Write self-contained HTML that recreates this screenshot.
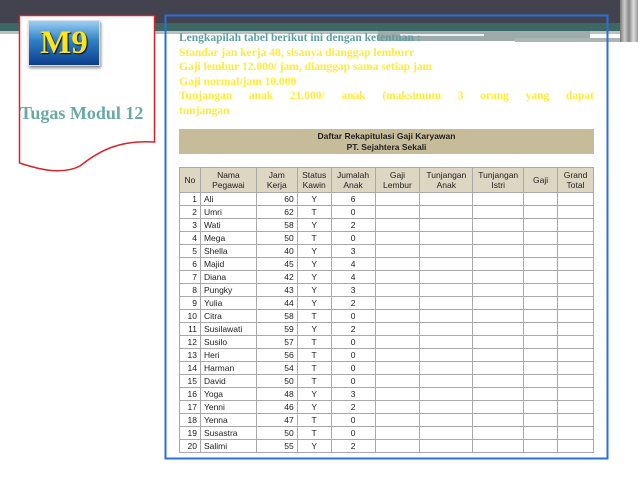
<!DOCTYPE html>
<html><head><meta charset="utf-8"><style>
body{margin:0;width:638px;height:478px;background:#fff;position:relative;overflow:hidden;font-family:"Liberation Serif",serif}
.abs{position:absolute}
table{border-collapse:collapse;font-family:"Liberation Sans",sans-serif;font-size:8.5px;color:#222}
td{border:1px solid #a9a9a9;padding:0 3px;height:12px;line-height:12px;white-space:nowrap}
th{background:#ddd6c2;border:1px solid #a9a9a9;font-weight:normal;font-size:8.5px;line-height:10px;height:24px;padding:0}
.r{text-align:right}.c{text-align:center}
.t{color:#ffeb3b;font-weight:bold;font-size:11.5px;line-height:14.5px}
</style></head><body>
<div class="abs" style="left:0;top:0;width:638px;height:23px;background:#43434f"></div>
<div class="abs" style="left:0;top:23px;width:638px;height:8px;background:#3d6764"></div>
<div class="abs" style="left:0;top:31px;width:638px;height:3px;background:#b7c1c1"></div>
<div class="abs" style="left:378px;top:31px;width:212px;height:10px;background:#9eabab"></div>
<div class="abs" style="left:515px;top:38px;width:115px;height:4px;background:#aab5b5"></div>
<div class="abs" style="left:400px;top:34px;width:84px;height:2px;background:#eef"></div>
<div class="abs" style="left:620px;top:0;width:18px;height:42px;background:linear-gradient(90deg,#777,#ccc,#888,#ddd,#999)"></div>
<svg class="abs" style="left:0;top:0" width="638" height="478">
<path d="M19.5 15.5 H154.5 V142 C120 140 100 150 80 166 C60 176 35 168 19.5 163 Z" fill="#fff" stroke="#d4242c" stroke-width="1.5"/>
<rect x="165.5" y="15.5" width="442" height="443" fill="none" stroke="#2b6fd9" stroke-width="2"/>
</svg>
<div class="abs" style="left:28px;top:20px;width:70px;height:44px;background:linear-gradient(#9ad0f2,#2f7fc4 45%,#0c3d8c);box-shadow:1px 2px 3px #888;border:1px solid #dde"></div>
<div class="abs" style="left:28px;top:20px;width:72px;text-align:center;color:#ffe41a;font-weight:bold;font-size:33px;line-height:46px;text-shadow:1px 1px 1px #000">M9</div>
<div class="abs" style="left:20px;top:103px;color:#6aa8a8;font-size:18px;font-weight:bold">Tugas Modul 12</div>
<div class="abs" style="left:179px;top:31px;width:415px">
<div style="color:#5f9ea0;font-weight:bold;font-size:11.5px;line-height:14.5px">Lengkapilah tabel berikut ini dengan ketentuan :</div>
<div class="t">Standar jan kerja 48, sisanya dianggap lemburr</div>
<div class="t">Gaji lembur 12.000/ jam, dianggap sama setiap jam</div>
<div class="t">Gaji normal/jam 10.000</div>
<div class="t" style="text-align:justify;text-align-last:justify">Tunjangan anak 21.000/ anak (maksimum 3 orang yang dapat</div>
<div class="t">tunjangan</div>
</div>
<div class="abs" style="left:179px;top:129px;width:415px;height:25px;background:#c7bc9a;text-align:center;font-family:'Liberation Sans',sans-serif;font-weight:bold;font-size:8.5px;line-height:11px;padding-top:2px;box-sizing:border-box;color:#222">Daftar Rekapitulasi Gaji Karyawan<br>PT. Sejahtera Sekali</div>
<table class="abs" style="left:179px;top:167px;width:415px">
<colgroup><col style="width:21px"><col style="width:56px"><col style="width:41px"><col style="width:34px"><col style="width:44px"><col style="width:45px"><col style="width:53px"><col style="width:51px"><col style="width:34px"><col style="width:36px"></colgroup>
<tr><th>No</th><th>Nama<br>Pegawai</th><th>Jam<br>Kerja</th><th>Status<br>Kawin</th><th>Jumalah<br>Anak</th><th>Gaji<br>Lembur</th><th>Tunjangan<br>Anak</th><th>Tunjangan<br>Istri</th><th>Gaji</th><th>Grand<br>Total</th></tr>
<tr><td class="r">1</td><td>Ali</td><td class="r">60</td><td class="c">Y</td><td class="c">6</td><td></td><td></td><td></td><td></td><td></td></tr>
<tr><td class="r">2</td><td>Umri</td><td class="r">62</td><td class="c">T</td><td class="c">0</td><td></td><td></td><td></td><td></td><td></td></tr>
<tr><td class="r">3</td><td>Wati</td><td class="r">58</td><td class="c">Y</td><td class="c">2</td><td></td><td></td><td></td><td></td><td></td></tr>
<tr><td class="r">4</td><td>Mega</td><td class="r">50</td><td class="c">T</td><td class="c">0</td><td></td><td></td><td></td><td></td><td></td></tr>
<tr><td class="r">5</td><td>Shella</td><td class="r">40</td><td class="c">Y</td><td class="c">3</td><td></td><td></td><td></td><td></td><td></td></tr>
<tr><td class="r">6</td><td>Majid</td><td class="r">45</td><td class="c">Y</td><td class="c">4</td><td></td><td></td><td></td><td></td><td></td></tr>
<tr><td class="r">7</td><td>Diana</td><td class="r">42</td><td class="c">Y</td><td class="c">4</td><td></td><td></td><td></td><td></td><td></td></tr>
<tr><td class="r">8</td><td>Pungky</td><td class="r">43</td><td class="c">Y</td><td class="c">3</td><td></td><td></td><td></td><td></td><td></td></tr>
<tr><td class="r">9</td><td>Yulia</td><td class="r">44</td><td class="c">Y</td><td class="c">2</td><td></td><td></td><td></td><td></td><td></td></tr>
<tr><td class="r">10</td><td>Citra</td><td class="r">58</td><td class="c">T</td><td class="c">0</td><td></td><td></td><td></td><td></td><td></td></tr>
<tr><td class="r">11</td><td>Susilawati</td><td class="r">59</td><td class="c">Y</td><td class="c">2</td><td></td><td></td><td></td><td></td><td></td></tr>
<tr><td class="r">12</td><td>Susilo</td><td class="r">57</td><td class="c">T</td><td class="c">0</td><td></td><td></td><td></td><td></td><td></td></tr>
<tr><td class="r">13</td><td>Heri</td><td class="r">56</td><td class="c">T</td><td class="c">0</td><td></td><td></td><td></td><td></td><td></td></tr>
<tr><td class="r">14</td><td>Harman</td><td class="r">54</td><td class="c">T</td><td class="c">0</td><td></td><td></td><td></td><td></td><td></td></tr>
<tr><td class="r">15</td><td>David</td><td class="r">50</td><td class="c">T</td><td class="c">0</td><td></td><td></td><td></td><td></td><td></td></tr>
<tr><td class="r">16</td><td>Yoga</td><td class="r">48</td><td class="c">Y</td><td class="c">3</td><td></td><td></td><td></td><td></td><td></td></tr>
<tr><td class="r">17</td><td>Yenni</td><td class="r">46</td><td class="c">Y</td><td class="c">2</td><td></td><td></td><td></td><td></td><td></td></tr>
<tr><td class="r">18</td><td>Yenna</td><td class="r">47</td><td class="c">T</td><td class="c">0</td><td></td><td></td><td></td><td></td><td></td></tr>
<tr><td class="r">19</td><td>Susastra</td><td class="r">50</td><td class="c">T</td><td class="c">0</td><td></td><td></td><td></td><td></td><td></td></tr>
<tr><td class="r">20</td><td>Salimi</td><td class="r">55</td><td class="c">Y</td><td class="c">2</td><td></td><td></td><td></td><td></td><td></td></tr>
</table>
</body></html>
